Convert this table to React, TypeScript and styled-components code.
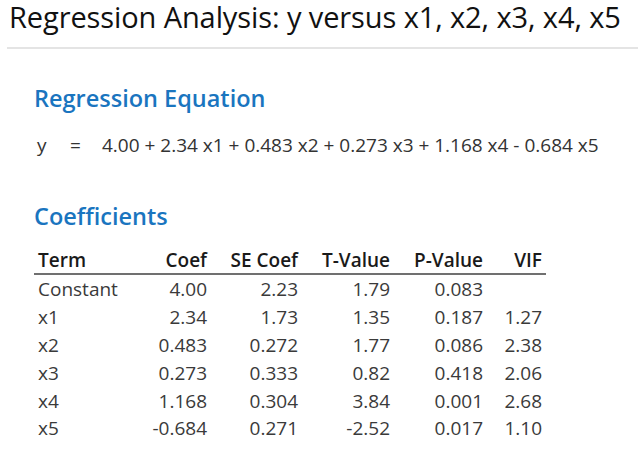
import React from "react";
import styled, { createGlobalStyle } from "styled-components";

const Global = createGlobalStyle`
  html, body { margin: 0; padding: 0; background: #ffffff; }
  body { font-family: "Open Sans", "Noto Sans", sans-serif; }
`;

const Page = styled.div`
  width: 638px;
  height: 469px;
  overflow: hidden;
  background: #fff;
`;

const TitleBar = styled.header`
  margin-left: 7px;
  padding-left: 2px;
  border-bottom: 2px solid #e4e4e4;
  padding-bottom: 13px;
`;

const Title = styled.h1`
  margin: 0;
  font-size: 29px;
  line-height: 34px;
  font-weight: 400;
  color: #111;
  white-space: nowrap;
  letter-spacing: -0.1px;
`;

const Body = styled.main`
  padding-left: 34px;
`;

const Heading = styled.h2<{ $top: number }>`
  margin: ${(p) => p.$top}px 0 0 0;
  font-size: 23.5px;
  line-height: 30px;
  font-weight: 600;
  color: #1a75bf;
`;

const Equation = styled.div`
  margin-top: 20px;
  margin-left: 3px;
  display: flex;
  font-size: 19px;
  line-height: 24px;
  color: #333;
  white-space: nowrap;
`;

const EqPart = styled.span<{ $w?: number }>`
  width: ${(p) => (p.$w ? `${p.$w}px` : "auto")};
`;

const Table = styled.table`
  margin-top: 16px;
  border-collapse: collapse;
  font-size: 19px;
  color: #3a3a3a;
`;

const HeadCell = styled.th<{ $w: number; $left?: boolean }>`
  width: ${(p) => p.$w}px;
  box-sizing: border-box;
  padding: 0 4px;
  height: 26px;
  line-height: 26px;
  text-align: ${(p) => (p.$left ? "left" : "right")};
  font-weight: 600;
  color: #1a1a1a;
  border-bottom: 2px solid #707070;
  white-space: nowrap;
`;

const Cell = styled.td<{ $left?: boolean }>`
  padding: 0 4px;
  height: 27.9px;
  line-height: 24px;
  text-align: ${(p) => (p.$left ? "left" : "right")};
  white-space: nowrap;
`;

const cols = [
  { name: "Term", w: 96, left: true },
  { name: "Coef", w: 81 },
  { name: "SE Coef", w: 91 },
  { name: "T-Value", w: 92 },
  { name: "P-Value", w: 93 },
  { name: "VIF", w: 59 },
];

const rows = [
  ["Constant", "4.00", "2.23", "1.79", "0.083", ""],
  ["x1", "2.34", "1.73", "1.35", "0.187", "1.27"],
  ["x2", "0.483", "0.272", "1.77", "0.086", "2.38"],
  ["x3", "0.273", "0.333", "0.82", "0.418", "2.06"],
  ["x4", "1.168", "0.304", "3.84", "0.001", "2.68"],
  ["x5", "-0.684", "0.271", "-2.52", "0.017", "1.10"],
];

export default function App() {
  return (
    <Page>
      <Global />
      <TitleBar>
        <Title>Regression Analysis: y versus x1, x2, x3, x4, x5</Title>
      </TitleBar>
      <Body>
        <Heading $top={34}>Regression Equation</Heading>
        <Equation>
          <EqPart $w={33}>y</EqPart>
          <EqPart $w={32}>=</EqPart>
          <EqPart>4.00 + 2.34 x1 + 0.483 x2 + 0.273 x3 + 1.168 x4 - 0.684 x5</EqPart>
        </Equation>
        <Heading $top={44}>Coefficients</Heading>
        <Table>
          <thead>
            <tr>
              {cols.map((c) => (
                <HeadCell key={c.name} $w={c.w} $left={c.left}>
                  {c.name}
                </HeadCell>
              ))}
            </tr>
          </thead>
          <tbody>
            {rows.map((r) => (
              <tr key={r[0]}>
                {r.map((v, i) => (
                  <Cell key={i} $left={i === 0}>
                    {v}
                  </Cell>
                ))}
              </tr>
            ))}
          </tbody>
        </Table>
      </Body>
    </Page>
  );
}
